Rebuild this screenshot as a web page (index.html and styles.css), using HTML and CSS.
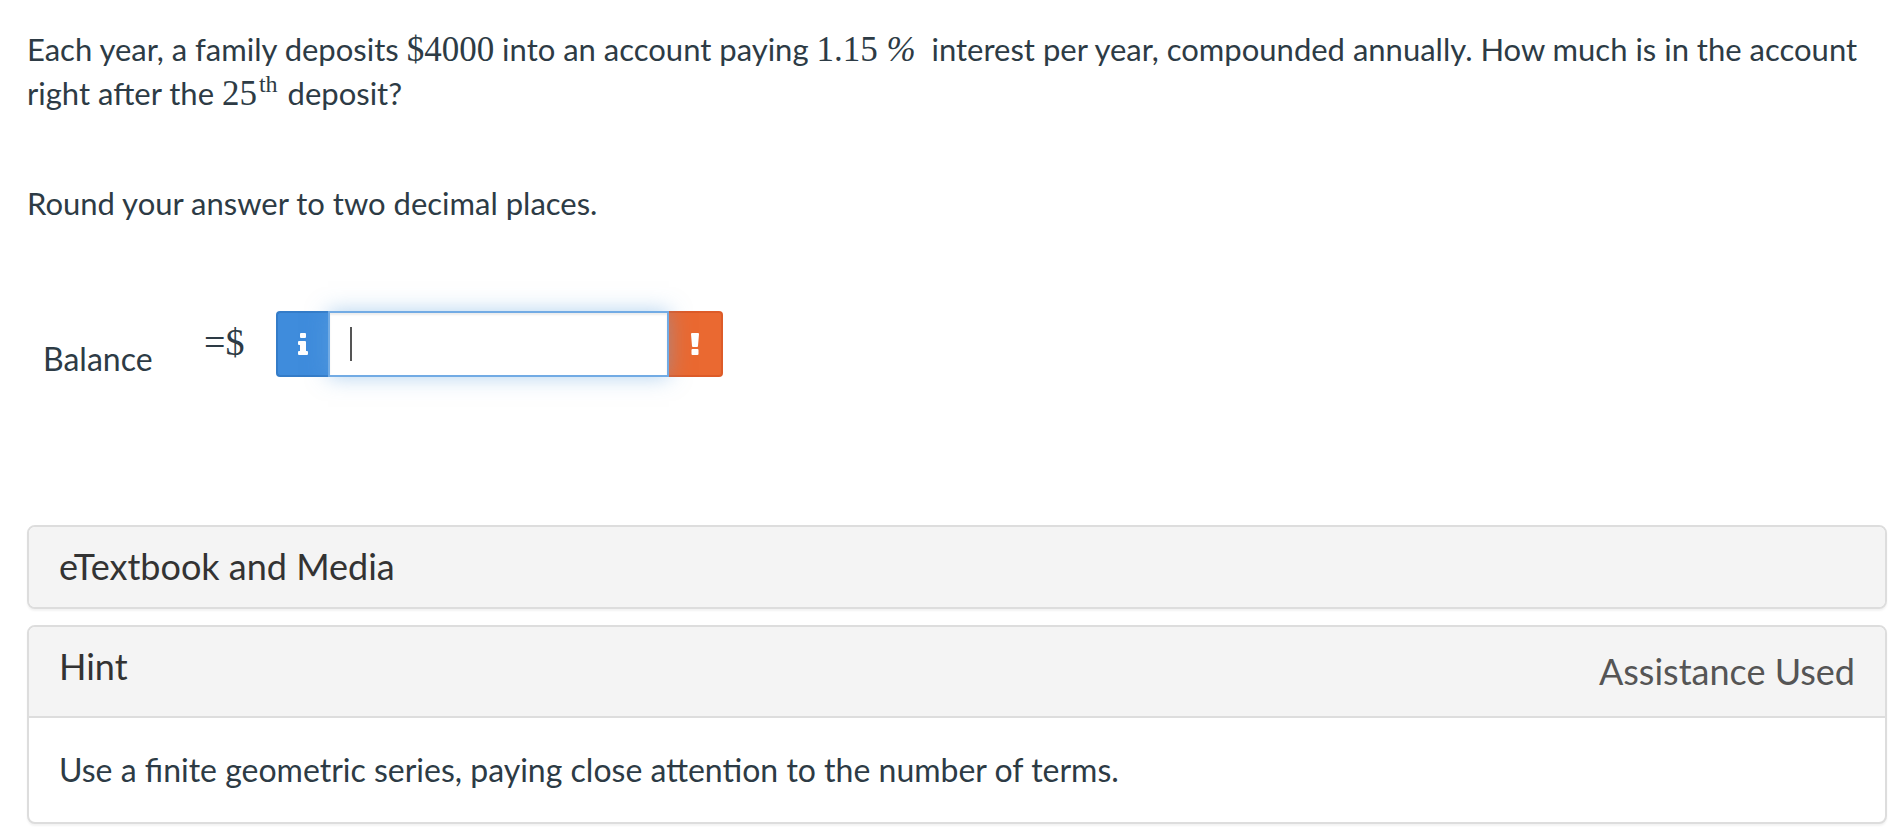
FILE: index.html
```
<!DOCTYPE html>
<html lang="en">
<head>
    <meta charset="UTF-8">
    <title>Annual deposits</title>
    <link rel="stylesheet" href="styles.css">
</head>
<body>
<div class="question">
    <p>Each year, a family deposits <span class="math">$4000</span> into an account paying <span class="math">1.15&nbsp;<i>%</i></span>&nbsp; interest per year, compounded annually. How much is in the account right after the <span class="math">25<sup>th</sup></span> deposit?</p>
    <p>Round your answer to two decimal places.</p>
</div>
<form class="answer">
    <label for="balance">Balance</label>
    <span class="math unit">=$</span>
    <div class="input-group">
        <button type="button" class="addon info" aria-label="Information">
            <svg width="10" height="22" viewBox="0 0 10 22"><path d="M3 0h4q1 0 1 1v3q0 1-1 1H3q-1 0-1-1V1q0-1 1-1zM1 8h6q1 0 1 1v9h1q1 0 1 1v2q0 1-1 1H1q-1 0-1-1v-2q0-1 1-1h1v-6H1q-1 0-1-1V9q0-1 1-1z" fill="#fff"/></svg>
        </button>
        <input type="text" id="balance" autocomplete="off">
        <button type="button" class="addon error" aria-label="Error">
            <svg width="8" height="22" viewBox="0 0 8 22"><path d="M1 0h6q1 0 1 1l-1 12q0 1-1 1H2q-1 0-1-1L0 1q0-1 1-1zM1.500 16h5q1 0 1 1v4q0 1-1 1h-5q-1 0-1-1v-4q0-1 1-1z" fill="#fff"/></svg>
        </button>
    </div>
</form>
<div class="panel">
    <div class="panel-heading"><h4>eTextbook and Media</h4></div>
</div>
<div class="panel">
    <div class="panel-heading hint">
        <h4>Hint</h4>
        <span class="used">Assistance Used</span>
    </div>
    <div class="panel-body">Use a finite geometric series, paying close attention to the number of terms.</div>
</div>
</body>
</html>
```
FILE: styles.css
```
*{
    box-sizing: border-box;
}
body{
    margin: 0;
    padding: 27px 15px 0 27px;
    background-color: #fff;
    color: #2d3b45;
    font: 32px/44px Lato, "Liberation Sans", sans-serif;
}
p,h4{
    margin: 0;
}
.question{
    font-size: 31px;
}
.question p{
    margin-bottom: 66px;
}
.math{
    font-family: "Liberation Serif", serif;
    font-size: 35px;
    line-height: 1;
}
.math sup{
    font-size: 24px;
    line-height: 0;
    margin: 0 2px;
}
.answer{
    display: flex;
    align-items: center;
    height: 66px;
    margin: 86px 0 148px;
    padding-left: 16px;
}
.answer label{
    width: 161px;
    padding-top: 30px;
}
.unit{
    width: 72px;
    padding-bottom: 4px;
    font-size: 38px;
}
.input-group{
    display: flex;
    height: 66px;
}
.addon{
    display: flex;
    align-items: center;
    justify-content: center;
    width: 54px;
    padding: 0;
    border: 2px solid;
    color: #fff;
}
.info{
    width: 52px;
    background-color: #3f8cdc;
    border-color: #347cc8;
    border-right: 0;
    border-radius: 4px 0 0 4px;
}
.error{
    background-color: #ea6931;
    border-color: #dd5b28;
    border-left: 0;
    border-radius: 0 4px 4px 0;
}
/* focused state, with its insertion mark */
.input-group input{
    position: relative;
    width: 341px;
    padding: 0 20px;
    border: 2px solid #72abe4;
    border-radius: 0;
    outline: 0;
    font: inherit;
    color: #555;
    background: #fff linear-gradient(#555, #555) no-repeat 20px 14px / 2px 34px;
    box-shadow: inset 0 2px 2px rgba(0,0,0,.075), 0 0 20px rgba(102,165,223,.5);
}
.panel{
    border: 2px solid #ddd;
    border-radius: 8px;
    margin-bottom: 16px;
    background-color: #fff;
    box-shadow: 0 2px 2px rgba(0,0,0,.05);
}
.panel-heading{
    padding: 17px 30px 19px;
    border-radius: 6px;
    background-color: #f4f4f4;
    color: #333;
}
.panel-heading h4,.used{
    font-size: 36px;
    font-weight: 400;
    line-height: 44px;
}
.hint{
    display: flex;
    justify-content: space-between;
    padding-bottom: 23px;
    border-bottom: 2px solid #ddd;
    border-radius: 6px 6px 0 0;
}
.used{
    padding-top: 5px;
    color: #555;
}
.panel-body{
    padding: 30px;
}
```
